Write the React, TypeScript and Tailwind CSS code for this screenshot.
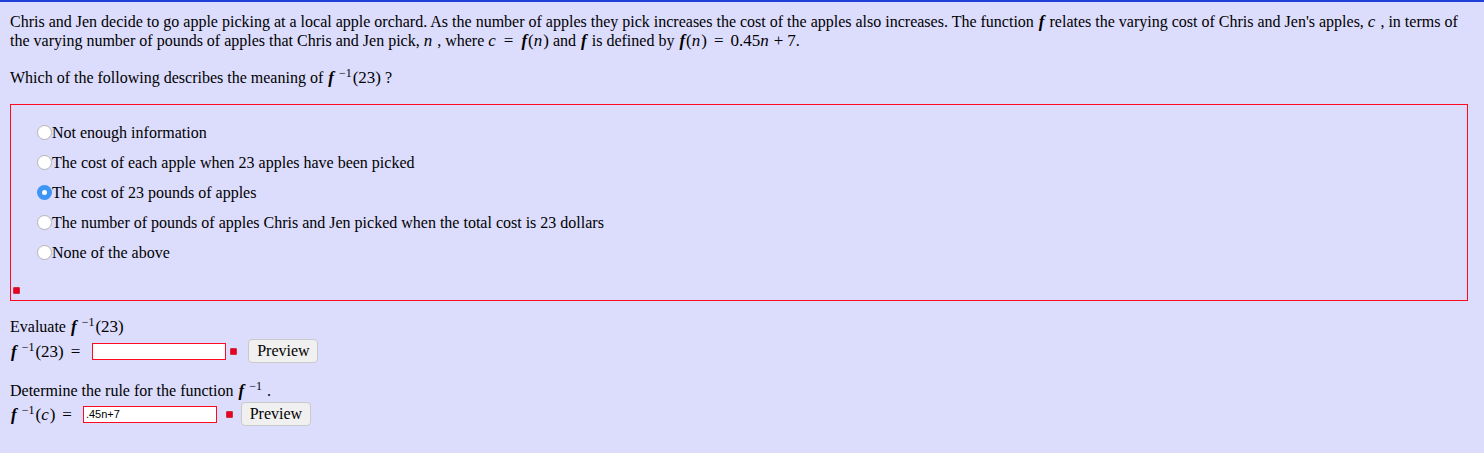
import React from 'react';

const options = [
  'Not enough information',
  'The cost of each apple when 23 apples have been picked',
  'The cost of 23 pounds of apples',
  'The number of pounds of apples Chris and Jen picked when the total cost is 23 dollars',
  'None of the above',
];

function V({ children }: { children: React.ReactNode }) {
  return <i className="mr-[1px] font-['Liberation_Serif',serif] text-[17px]">{children}</i>;
}

function F() {
  return <i className="mx-[1px] font-['Liberation_Serif',serif] text-[17px] font-bold">f</i>;
}

function M({ children }: { children: React.ReactNode }) {
  return <span className="text-[17px]">{children}</span>;
}

function FInv() {
  return (
    <span className="whitespace-nowrap">
      <F />
      <span className="relative -top-[6px] ml-[4px] mr-[1px] inline-block text-[12px] leading-none">−1</span>
    </span>
  );
}

function Eq() {
  return <span className="mx-[7px] text-[17px]">=</span>;
}

function Mark() {
  return <span className="inline-block h-[7px] w-[7px] rounded-[1px] border border-[#c33] bg-[#e8002a]" />;
}

function Radio({ checked }: { checked?: boolean }) {
  if (checked) {
    return (
      <span className="flex h-[15px] w-[15px] items-center justify-center rounded-full bg-[#3d95f5]">
        <span className="h-[5px] w-[5px] rounded-full bg-white" />
      </span>
    );
  }
  return <span className="h-[15px] w-[15px] rounded-full border border-[#b5b5b5] bg-white" />;
}

function PreviewButton() {
  return (
    <button className="h-[24px] w-[70px] rounded-[4px] border border-[#c9c9c9] bg-[#f0f0f0] text-[16px] leading-none text-black">
      Preview
    </button>
  );
}

export default function App() {
  return (
    <div className="min-h-[453px] w-full border-t-2 border-[#1f3fd6] bg-[#dcdcfc] px-[10px] pt-[10px] font-['Liberation_Serif',serif] text-[16px] leading-[19px] text-black">
      <p>
        Chris and Jen decide to go apple picking at a local apple orchard. As the number of apples they pick increases the cost of the apples also increases. The function <F /> relates the varying cost of Chris and Jen's apples, <V>c</V> , in terms of the varying number of pounds of apples that Chris and Jen pick, <V>n</V> , where <V>c</V>
        <Eq />
        <F />
        <M>(</M>
        <V>n</V>
        <M>)</M> and <F /> is defined by <F />
        <M>(</M>
        <V>n</V>
        <M>)</M>
        <Eq />
        <M>0.45</M>
        <V>n</V>
        <span className="mx-[4px] text-[17px]">+</span>
        <M>7</M>.
      </p>
      <p className="mt-[18px]">
        Which of the following describes the meaning of <FInv />
        <M>(23)</M> ?
      </p>

      <div className="mt-[17px] mr-[6px] border border-[#ff0a1e] pt-[17px] pb-[3px]">
        <div className="flex flex-col gap-[10px] pl-[26px]">
          {options.map((o, i) => (
            <label key={i} className="flex h-[20px] items-center">
              <Radio checked={i === 2} />
              <span>{o}</span>
            </label>
          ))}
        </div>
        <div className="mt-[19px] pl-[2px] leading-none">
          <Mark />
        </div>
      </div>

      <div className="mt-[16px]">
        <div>
          Evaluate <FInv />
          <M>(23)</M>
        </div>
        <div className="mt-[3px] flex items-center">
          <span className="whitespace-nowrap">
            <FInv />
            <M>(23)</M>
          </span>
          <Eq />
          <input
            className="ml-[5px] h-[17px] w-[134px] border border-[#ff0a1e] bg-white"
            defaultValue=""
          />
          <span className="ml-[4px] flex items-center">
            <Mark />
          </span>
          <span className="ml-[11px]">
            <PreviewButton />
          </span>
        </div>
      </div>

      <div className="mt-[18px]">
        <div>
          Determine the rule for the function <FInv /> .
        </div>
        <div className="mt-[2px] flex items-center">
          <span className="whitespace-nowrap">
            <FInv />
            <M>(</M>
            <V>c</V>
            <M>)</M>
          </span>
          <Eq />
          <input
            className="ml-[4px] h-[17px] w-[134px] border border-[#ff0a1e] bg-white px-[2px] font-['Liberation_Sans',sans-serif] text-[11px]"
            defaultValue=".45n+7"
          />
          <span className="ml-[9px] flex items-center">
            <Mark />
          </span>
          <span className="ml-[8px]">
            <PreviewButton />
          </span>
        </div>
      </div>
    </div>
  );
}
